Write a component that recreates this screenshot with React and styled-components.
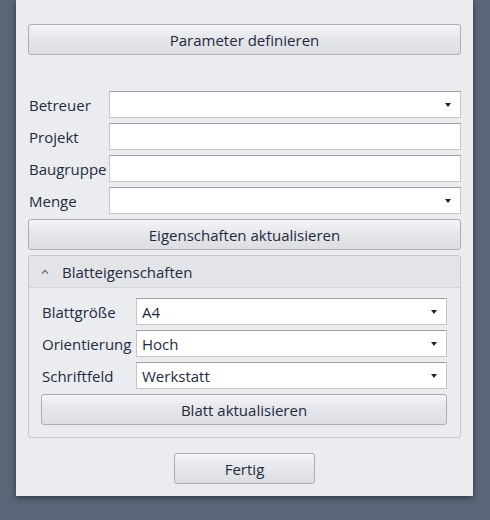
import React from 'react'
import styled, { createGlobalStyle } from 'styled-components'

const Global = createGlobalStyle`
  html, body {
    margin: 0;
    padding: 0;
    background: #5a6678;
    height: 520px;
    overflow: hidden;
  }
  * { box-sizing: border-box; }
`

const Panel = styled.div`
  margin-left: 16px;
  width: 457px;
  height: 496px;
  background: #ebecf0;
  box-shadow: 0 2px 6px rgba(0, 0, 0, 0.45);
  padding: 24px 12px 0 12px;
  display: flex;
  flex-direction: column;
  font-family: 'Open Sans', 'Noto Sans', sans-serif;
  font-size: 15px;
  color: #1e2a40;
`

const Button = styled.button`
  height: 31px;
  width: ${({ w }) => (w ? w : '100%')};
  align-self: ${({ center }) => (center ? 'center' : 'stretch')};
  margin-top: ${({ mt }) => mt || 0}px;
  border: 1px solid #aaadb6;
  border-radius: 3px;
  background: linear-gradient(#f4f5f7 0%, #e6e7eb 45%, #dcdee2 100%);
  font-family: inherit;
  font-size: 15px;
  color: #1e2a40;
  padding: 0;
  cursor: pointer;
`

const Form = styled.div`
  display: grid;
  grid-template-columns: ${({ label }) => label}px 1fr;
  row-gap: 5px;
  margin-top: ${({ mt }) => mt || 0}px;
  align-items: center;
`

const Label = styled.div`
  font-size: 15px;
  padding-left: 1px;
  white-space: nowrap;
`

const Field = styled.div`
  height: 27px;
  background: #fff;
  border: 1px solid #c4c6cc;
  border-top-color: #9ea1a9;
  display: flex;
  align-items: center;
  padding: 0 9px 0 5px;
  font-size: 15px;
  color: #1e2a40;
`

const Value = styled.span`
  flex: 1;
`

const Arrow = styled.span`
  width: 0;
  height: 0;
  border-left: 3.5px solid transparent;
  border-right: 3.5px solid transparent;
  border-top: 4px solid #20232a;
`

const Group = styled.div`
  margin-top: 5px;
  border: 1px solid #c5c7cd;
  border-radius: 3px;
  display: flex;
  flex-direction: column;
`

const GroupHead = styled.div`
  height: 32px;
  background: #e3e4e8;
  border-bottom: 1px solid #d3d5da;
  display: flex;
  align-items: center;
  padding-left: 12px;
  gap: 13px;
  font-size: 15px;
`

const GroupBody = styled.div`
  padding: 10px 13px 12px 12px;
  display: flex;
  flex-direction: column;
`

const Chevron = () => (
  <svg width="8" height="6" viewBox="0 0 8 6">
    <polyline points="1,4.5 4,1.5 7,4.5" fill="none" stroke="#6b7080" strokeWidth="1.3" />
  </svg>
)

const Row = ({ label, value, select }) => (
  <>
    <Label>{label}</Label>
    <Field>
      <Value>{value}</Value>
      {select && <Arrow />}
    </Field>
  </>
)

export default function App() {
  return (
    <>
      <Global />
      <Panel>
        <Button>Parameter definieren</Button>
        <Form label={81} mt={36}>
          <Row label="Betreuer" select />
          <Row label="Projekt" />
          <Row label="Baugruppe" />
          <Row label="Menge" select />
        </Form>
        <Button mt={5}>Eigenschaften aktualisieren</Button>
        <Group>
          <GroupHead>
            <Chevron />
            Blatteigenschaften
          </GroupHead>
          <GroupBody>
            <Form label={95}>
              <Row label="Blattgröße" value="A4" select />
              <Row label="Orientierung" value="Hoch" select />
              <Row label="Schriftfeld" value="Werkstatt" select />
            </Form>
            <Button mt={5}>Blatt aktualisieren</Button>
          </GroupBody>
        </Group>
        <Button mt={15} w="141px" center>
          Fertig
        </Button>
      </Panel>
    </>
  )
}
